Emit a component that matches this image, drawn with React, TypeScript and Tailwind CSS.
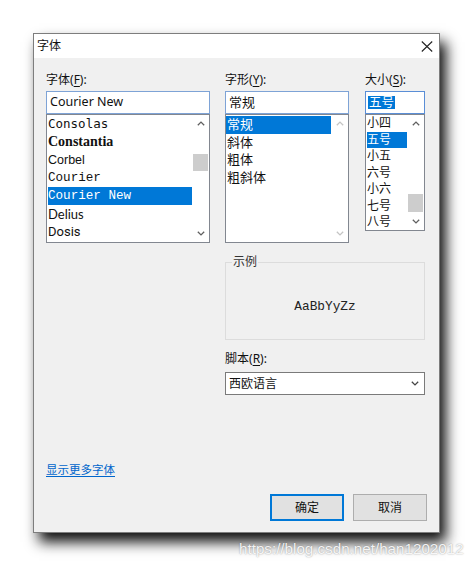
import React from 'react';

type FontItem = { name: string; cls: string };

const fontItems: FontItem[] = [
    { name: 'Consolas', cls: "font-['DejaVu_Sans_Mono',monospace] text-[12.5px]" },
    { name: 'Constantia', cls: "font-['Liberation_Serif',serif] text-[14px] font-bold" },
    { name: 'Corbel', cls: "font-['Liberation_Sans',sans-serif] text-[12.5px]" },
    { name: 'Courier', cls: "font-['Liberation_Mono',monospace] text-[12.6px]" },
    { name: 'Courier New', cls: "font-['Liberation_Mono',monospace] text-[12.6px]" },
    { name: 'Delius', cls: "font-['Lato',sans-serif] text-[13px]" },
    { name: 'Dosis', cls: "font-['Liberation_Sans_Narrow','Roboto',sans-serif] text-[13px]" },
];

const styleItems = ['常规', '斜体', '粗体', '粗斜体'];
const sizeItems = ['小四', '五号', '小五', '六号', '小六', '七号', '八号'];

function Chevron({ up, color }: { up?: boolean; color: string }) {
    return (
        <svg width="8" height="5" viewBox="0 0 8 5" fill="none">
            <polyline
                points={up ? '0.8,4.3 4,1.1 7.2,4.3' : '0.8,0.7 4,3.9 7.2,0.7'}
                stroke={color}
                strokeWidth="1.3"
            />
        </svg>
    );
}

// vertical scrollbar: arrow, track (with optional thumb), arrow
function ScrollBar({ thumb, disabled }: { thumb?: string; disabled?: boolean }) {
    const color = disabled ? '#c4c4c4' : '#606060';
    return (
        <div className="w-[17px] shrink-0 flex flex-col bg-white">
            <div className="h-[17px] flex items-center justify-center">
                <Chevron up color={color} />
            </div>
            <div className="flex-1 flex flex-col px-[1px]">
                {thumb && <div className={`bg-[#cdcdcd] ${thumb}`} />}
            </div>
            <div className="h-[17px] flex items-center justify-center">
                <Chevron color={color} />
            </div>
        </div>
    );
}

function Label({ text, keyChar }: { text: string; keyChar: string }) {
    return (
        <div className="h-[16px] leading-[16px] text-[12px] text-[#111]">
            {text}(<span className="underline underline-offset-2">{keyChar}</span>):
        </div>
    );
}

export default function App() {
    return (
        <div className="relative w-[474px] h-[566px] overflow-hidden bg-white font-['Noto_Sans','Noto_Sans_CJK_SC',sans-serif] text-[#111]">

            {/* Dialog window */}
            <div className="ml-[33px] mt-[33px] w-[407px] h-[500px] border border-[#7d7d7d] bg-[#f0f0f0] flex flex-col shadow-[6px_9px_13px_rgba(0,0,0,0.95)]">

                {/* Title bar */}
                <div className="h-[24px] bg-white flex items-center justify-between pl-[3px] pr-[6px]">
                    <span className="text-[12px] leading-none">字体</span>
                    <svg width="12" height="11" viewBox="0 0 12 11">
                        <path d="M0.8 0.5 L11.2 10.5 M11.2 0.5 L0.8 10.5" stroke="#222" strokeWidth="1.1" />
                    </svg>
                </div>

                <div className="flex-1 flex flex-col pl-[12px] pt-[14px]">
                    <div className="flex">

                        {/* Font family */}
                        <div className="w-[164px] flex flex-col">
                            <Label text="字体" keyChar="F" />
                            <div className="mt-[3px] h-[23px] border border-[#7ea3d6] bg-white flex items-center pl-[3px] text-[12.5px] font-['Noto_Sans',sans-serif]">
                                Courier New
                            </div>
                            <div className="h-[129px] border border-[#828790] bg-white flex overflow-hidden">
                                <div className="flex-1 flex flex-col pl-[1px]">
                                    {fontItems.map((f) => {
                                        const sel = f.name === 'Courier New';
                                        return (
                                            <div
                                                key={f.name}
                                                className={`h-[18px] shrink-0 leading-[18px] whitespace-nowrap ${f.cls} ${sel ? 'bg-[#0078d7] text-white' : 'text-[#111]'}`}
                                            >
                                                {f.name}
                                            </div>
                                        );
                                    })}
                                </div>
                                <ScrollBar thumb="mt-[22px] h-[17px]" />
                            </div>
                        </div>

                        <div className="ml-[15px] w-[200px] flex flex-col">
                            <div className="flex">

                                {/* Font style */}
                                <div className="w-[124px] flex flex-col">
                                    <Label text="字形" keyChar="Y" />
                                    <div className="mt-[3px] h-[23px] border border-[#7ea3d6] bg-white flex items-center pl-[3px] text-[13px]">
                                        常规
                                    </div>
                                    <div className="h-[129px] border border-[#828790] bg-white flex overflow-hidden">
                                        <div className="flex-1 flex flex-col pt-[1px]">
                                            {styleItems.map((s, i) => (
                                                <div
                                                    key={s}
                                                    className={`h-[17.5px] shrink-0 leading-[17.5px] pl-[1px] text-[13px] ${i === 0 ? 'bg-[#0078d7] text-white' : ''}`}
                                                >
                                                    {s}
                                                </div>
                                            ))}
                                        </div>
                                        <ScrollBar disabled />
                                    </div>
                                </div>

                                {/* Size */}
                                <div className="ml-[16px] w-[60px] flex flex-col">
                                    <Label text="大小" keyChar="S" />
                                    <div className="mt-[3px] h-[23px] border border-[#5a8ed6] bg-white flex items-center pl-[2px] text-[12.5px]">
                                        <span className="bg-[#0078d7] text-white leading-[13px] px-[1px]">五号</span>
                                    </div>
                                    <div className="h-[117px] border border-[#828790] bg-white flex overflow-hidden">
                                        <div className="flex-1 flex flex-col pl-[1px]">
                                            {sizeItems.map((s, i) => (
                                                <div
                                                    key={s}
                                                    className={`h-[16.5px] shrink-0 leading-[16.5px] text-[12px] ${i === 1 ? 'bg-[#0078d7] text-white' : ''}`}
                                                >
                                                    {s}
                                                </div>
                                            ))}
                                        </div>
                                        <ScrollBar thumb="mt-[62px] h-[18px]" />
                                    </div>
                                </div>
                            </div>

                            {/* Sample */}
                            <fieldset className="mt-[11px] border border-[#dcdcdc] px-0">
                                <legend className="ml-[6px] px-[1px] text-[12px] leading-[16px] text-[#333]">示例</legend>
                                <div className="h-[69px] flex items-center justify-center pt-[4px] font-['Liberation_Mono',monospace] text-[12.8px] text-[#222]">
                                    AaBbYyZz
                                </div>
                            </fieldset>

                            {/* Script */}
                            <div className="mt-[11px]">
                                <Label text="脚本" keyChar="R" />
                            </div>
                            <div className="mt-[5px] h-[23px] border border-[#7a7a7a] bg-white flex items-center justify-between pl-[3px] pr-[5px] text-[12px]">
                                <span>西欧语言</span>
                                <Chevron color="#444" />
                            </div>
                        </div>
                    </div>

                    <div className="mt-[67px] h-[16px] leading-[16px] text-[11.5px] text-[#0066cc] underline underline-offset-2">
                        显示更多字体
                    </div>

                    {/* Buttons */}
                    <div className="mt-[16px] flex justify-end gap-[9px] pr-[12px]">
                        <button className="w-[74px] h-[27px] border-2 border-[#0078d7] bg-[#e1e1e1] text-[12px] text-[#111]">
                            确定
                        </button>
                        <button className="w-[74px] h-[27px] border border-[#adadad] bg-[#e1e1e1] text-[12px] text-[#111]">
                            取消
                        </button>
                    </div>
                </div>
            </div>

            {/* Blog watermark */}
            <div className="absolute left-[239px] top-[538px] font-['Liberation_Sans',Arial,sans-serif] text-[15.2px] text-white/90 [text-shadow:0_0_1.5px_rgba(0,0,0,0.45)]">
                https://blog.csdn.net/han1202012
            </div>
        </div>
    );
}
